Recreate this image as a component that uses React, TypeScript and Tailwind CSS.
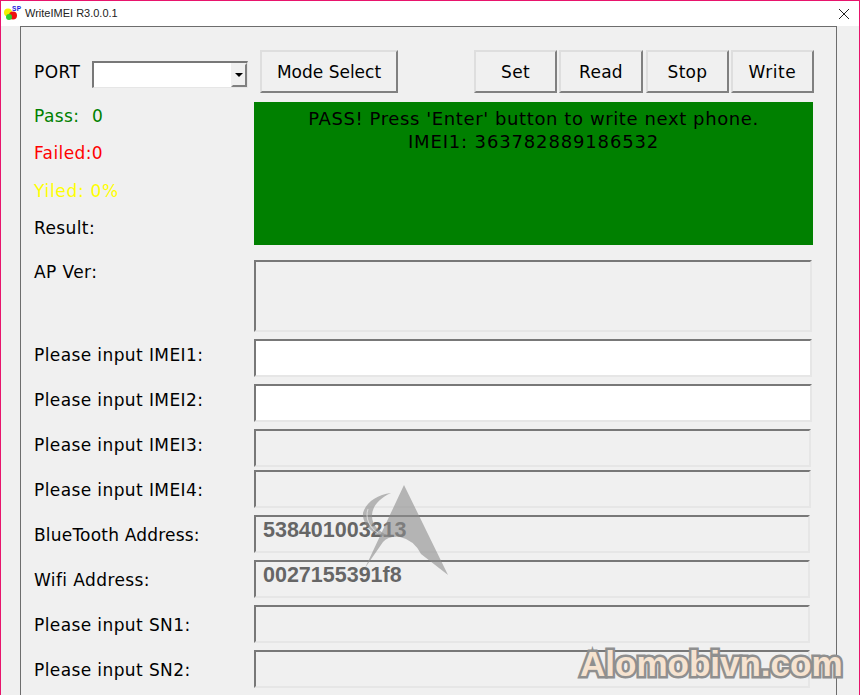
const fieldCls = 'border-2 border-t-[#787878] border-l-[#787878] border-r-[#e6e6e6] border-b-[#e6e6e6]'
const btnCls =
  'flex h-[43px] items-center justify-center border-2 border-t-[#dedede] border-l-[#dedede] border-r-[#808080] border-b-[#808080] bg-[#f0f0f0] pt-[2px] text-black'

const labels = [
  { text: 'Please input IMEI1:' },
  { text: 'Please input IMEI2:' },
  { text: 'Please input IMEI3:' },
  { text: 'Please input IMEI4:' },
  { text: 'BlueTooth Address:', cls: 'tracking-[0.2px]' },
  { text: 'Wifi Address:' },
  { text: 'Please input SN1:' },
  { text: 'Please input SN2:' },
]

const fields = [
  { id: 'imei1', cls: 'mt-[7px] w-[558px] bg-white' },
  { id: 'imei2', cls: 'mt-[7px] w-[558px] bg-white' },
  { id: 'imei3', cls: 'mt-[7px] w-[557px]' },
  { id: 'imei4', cls: 'mt-[3px] w-[557px]' },
  { id: 'bt', cls: 'mt-[7px] w-[556px]', value: '538401003213' },
  { id: 'wifi', cls: 'mt-[7px] w-[556px]', value: '0027155391f8' },
  { id: 'sn1', cls: 'mt-[7px] w-[556px]' },
  { id: 'sn2', cls: 'mt-[7px] w-[556px]' },
]

function AppIcon() {
  return (
    <svg width="20" height="20" viewBox="0 0 20 20" className="shrink-0">
      <circle cx="5" cy="8.5" r="4" fill="#f5f000" />
      <circle cx="10" cy="11.5" r="4" fill="#f01010" />
      <circle cx="6" cy="13" r="3" fill="#30d030" />
      <text x="9" y="6.5" fontSize="6.5" fontWeight="700" fill="#2020e0" fontFamily="'Liberation Sans', sans-serif">SP</text>
    </svg>
  )
}

function Watermark() {
  return (
    <svg width="110" height="100" viewBox="0 0 110 100" className="absolute left-[349px] top-[479px]">
      <g fill="#8c8c8c" fillOpacity="0.6">
        <path d="M54 5 L98 95 L71 74 Q64 60 50 57 Q38 56 33 62 L15 88 Z" />
        <path d="M41 13 C27 15 16 22 13 33 C12 45 24 57 40 57 C30 52 22 46 22 36 C22 26 30 18 41 13 Z" />
      </g>
      <path d="M18 29 C15 38 19 47 28 53" fill="none" stroke="#f0f0f0" strokeOpacity="0.7" strokeWidth="1" />
    </svg>
  )
}

export default function App() {
  return (
    <div className="relative flex h-[695px] w-[860px] flex-col overflow-hidden border-x border-t border-[#e8146c] bg-[#f0f0f0] font-['DejaVu_Sans','Liberation_Sans',sans-serif] text-[17px] tracking-[0.4px] text-black">
      <div className="flex h-[25px] shrink-0 items-center bg-white pl-[2px] pr-[9px]">
        <AppIcon />
        <span className="ml-[2px] font-['Liberation_Sans',sans-serif] text-[11px] tracking-normal text-[#222]">WriteIMEI R3.0.0.1</span>
        <svg width="12" height="12" viewBox="0 0 12 12" className="ml-auto" fill="none" stroke="#222" strokeWidth="1">
          <path d="M1 1 L11 11 M11 1 L1 11" />
        </svg>
      </div>

      <div className="ml-[19px] flex w-[817px] flex-1 flex-col border-x border-t border-[#6d6d6d] pl-[13px] pt-[23px]">
        <div className="flex h-[43px] items-center">
          <span className="w-[58px] pt-[2px]">PORT</span>
          <div className="mt-[5px] flex h-[27px] w-[156px] items-stretch border-2 border-r border-b border-t-[#787878] border-l-[#787878] border-r-[#e6e6e6] border-b-[#e6e6e6] bg-white">
            <div className="ml-auto flex w-[16px] items-center justify-center border-2 border-t-[#f0f0f0] border-l-[#f0f0f0] border-r-[#808080] border-b-[#808080] bg-[#f0f0f0]">
              <div className="h-0 w-0 border-x-[4px] border-t-[4px] border-x-transparent border-t-black" />
            </div>
          </div>
          <button className={`${btnCls} ml-[12px] w-[138px] tracking-normal`}>Mode Select</button>
          <button className={`${btnCls} ml-[76px] w-[83px] tracking-[0.3px]`}>Set</button>
          <button className={`${btnCls} ml-[2px] w-[84px] tracking-[0.3px]`}>Read</button>
          <button className={`${btnCls} ml-[3px] w-[83px] tracking-[0.3px]`}>Stop</button>
          <button className={`${btnCls} ml-[2px] w-[83px] tracking-[0.6px]`}>Write</button>
        </div>

        <div className="mt-[9px] flex">
          <div className="w-[220px]">
            <div className="flex h-[37px] items-center pb-[7px] text-[#008000]">
              <span className="w-[58px]">Pass:</span>
              <span>0</span>
            </div>
            <div className="flex h-[38px] items-center pb-[9px] text-[#ff0000]">Failed:0</div>
            <div className="flex h-[37px] items-center pb-[7px] tracking-[0.7px] text-[#ffff00]">Yiled: 0%</div>
            <div className="flex h-[31px] items-center pb-[2px] text-black">Result:</div>
          </div>
          <div className="h-[143px] w-[559px] bg-[#008000] pt-[5px] text-center text-[18px] leading-[23px] tracking-[0.6px] text-black">
            <div>PASS! Press 'Enter' button to write next phone.</div>
            <div className="tracking-[0.85px]">IMEI1: 363782889186532</div>
          </div>
        </div>

        <div className="mt-[15px] flex h-[72px]">
          <span className="w-[220px]">AP Ver:</span>
          <div className={`h-full w-[558px] ${fieldCls}`} />
        </div>

        <div className="flex">
          <div className="flex w-[220px] flex-col pt-[1px]">
            {labels.map((label) => (
              <span key={label.text} className={`flex h-[45px] items-center ${label.cls ?? ''}`}>{label.text}</span>
            ))}
          </div>
          <div className="flex flex-col">
            {fields.map((field) => (
              <div
                key={field.id}
                className={`h-[38px] px-[7px] pt-[1px] font-['Liberation_Sans',sans-serif] text-[21.5px] font-bold leading-[24px] tracking-normal text-[#666] ${field.cls} ${fieldCls}`}
              >
                {field.value}
              </div>
            ))}
          </div>
        </div>
      </div>

      <Watermark />
      <span className="absolute left-[579px] top-[641px] font-['Liberation_Sans',sans-serif] text-[35px] font-bold leading-[44px] tracking-normal text-[#f6e3d0] [-webkit-text-stroke:5px_#8f8f8f] [paint-order:stroke_fill]">
        Alomobivn.com
      </span>
    </div>
  )
}
